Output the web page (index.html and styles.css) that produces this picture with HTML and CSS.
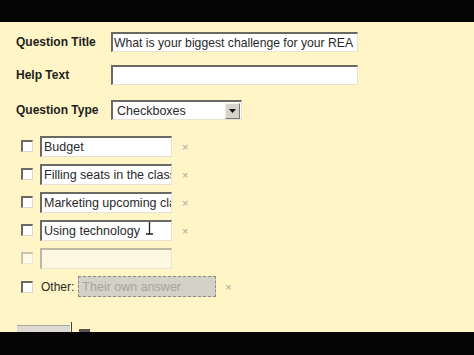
FILE: index.html
```html
<!DOCTYPE html>
<html>
<head>
<meta charset="utf-8">
<link rel="stylesheet" href="styles.css">
</head>
<body>
<div class="bar-top"></div>
<div class="main">
  <div class="field-row row-title">
    <span class="label">Question Title</span>
    <span class="input wide">What is your biggest challenge for your REA</span>
  </div>
  <div class="field-row row-help">
    <span class="label">Help Text</span>
    <span class="input wide"></span>
  </div>
  <div class="field-row row-type">
    <span class="label">Question Type</span>
    <span class="select"><span class="select-text">Checkboxes</span><span class="select-btn"><svg width="7" height="4" viewBox="0 0 7 4"><path d="M0 0H7L3.5 4Z" fill="#111"/></svg></span></span>
  </div>
  <div class="options">
    <div class="opt"><span class="cb"></span><span class="input opt-in">Budget</span><span class="x">×</span></div>
    <div class="opt"><span class="cb"></span><span class="input opt-in">Filling seats in the class</span><span class="x">×</span></div>
    <div class="opt"><span class="cb"></span><span class="input opt-in">Marketing upcoming classes</span><span class="x">×</span></div>
    <div class="opt"><span class="cb"></span><span class="input opt-in cursor-host">Using technology<svg class="ibeam" width="9" height="16" viewBox="0 0 9 16"><path d="M1 1H8M1 15H8M4.5 1V15" stroke="#222" stroke-width="1.3" fill="none"/></svg></span><span class="x">×</span></div>
    <div class="opt faded"><span class="cb"></span><span class="input opt-in"></span></div>
    <div class="opt other"><span class="cb"></span><span class="other-label">Other:</span><span class="other-in">Their own answer</span><span class="x">×</span></div>
  </div>
  <div class="bottom-row">
    <span class="btn"></span>
    <span class="btn-sep"></span>
    <span class="btn-small"></span>
  </div>
</div>
<div class="bar-bottom"></div>
</body>
</html>
```
FILE: styles.css
```css
html, body {
  margin: 0;
  padding: 0;
  background: #000;
}
body {
  width: 474px;
  height: 355px;
  overflow: hidden;
  font-family: "Liberation Sans", Arial, sans-serif;
}
.bar-top {
  height: 22px;
  background: #050505;
}
.bar-bottom {
  height: 23px;
  background: #050505;
}
.main {
  height: 310px;
  overflow: hidden;
  background: #fff5c6;
  padding: 10px 0 0 16px;
  box-sizing: border-box;
}
.field-row {
  display: flex;
  align-items: center;
  height: 20px;
}
.row-help { margin-top: 13px; }
.row-type { margin-top: 15px; }
.label {
  width: 95px;
  font-weight: bold;
  font-size: 12px;
  color: #1e1e1e;
}
.input {
  display: flex;
  align-items: center;
  box-sizing: border-box;
  height: 20px;
  background: #fff;
  border-top: 2px solid #6a6a62;
  border-left: 2px solid #6a6a62;
  border-right: 1px solid #e6e2d4;
  border-bottom: 1px solid #e6e2d4;
  font-size: 12.5px;
  color: #2a2a2a;
  padding-left: 2px;
  white-space: nowrap;
  overflow: hidden;
}
.wide { width: 247px; }
.row-title .input { font-size: 12.2px; padding-left: 1px; }
.select {
  display: flex;
  align-items: center;
  box-sizing: border-box;
  width: 131px;
  height: 20px;
  background: #fff;
  border-top: 2px solid #6a6a62;
  border-left: 2px solid #6a6a62;
  border-right: 1px solid #e6e2d4;
  border-bottom: 1px solid #e6e2d4;
}
.select-text {
  flex: 1;
  font-size: 12.5px;
  color: #2a2a2a;
  padding-left: 4px;
}
.select-btn {
  display: flex;
  align-items: center;
  justify-content: center;
  box-sizing: border-box;
  width: 15px;
  height: 16px;
  margin-right: 1px;
  background: #d6d3cb;
  border-top: 1px solid #f4f2ec;
  border-left: 1px solid #f4f2ec;
  border-right: 1px solid #7a7870;
  border-bottom: 1px solid #7a7870;
}
.options {
  margin-top: 16px;
  padding-left: 5px;
  display: flex;
  flex-direction: column;
  gap: 7px;
}
.opt {
  display: flex;
  align-items: center;
  height: 21px;
}
.cb {
  box-sizing: border-box;
  width: 12px;
  height: 12px;
  margin-top: -2px;
  background: #fff;
  border-top: 2px solid #6a6a62;
  border-left: 2px solid #6a6a62;
  border-right: 1px solid #dcd8ca;
  border-bottom: 1px solid #dcd8ca;
  margin-right: 7px;
}
.opt-in {
  width: 132px;
  height: 21px;
}
.x {
  font-size: 11px;
  color: #a8a8a0;
  margin-left: 10px;
}
.faded .cb {
  background: #fdf9e6;
  border-top-color: #c8c2ae;
  border-left-color: #c8c2ae;
  border-right-color: #efe9d4;
  border-bottom-color: #efe9d4;
}
.faded .opt-in {
  background: #fdf8df;
  border-top-color: #bdb7a3;
  border-left-color: #bdb7a3;
  border-right-color: #ece5cd;
  border-bottom-color: #ece5cd;
}
.other .cb { margin-top: 0; margin-right: 8px; }
.other-label {
  font-size: 12px;
  color: #2a2a2a;
  margin-right: 4px;
}
.other-in {
  box-sizing: border-box;
  width: 138px;
  height: 21px;
  display: flex;
  align-items: center;
  padding-left: 3px;
  background: #d4d1c6;
  border: 1px dashed #8e8c84;
  font-size: 12.5px;
  color: #a7a59c;
}
.other .x { margin-left: 9px; }
.cursor-host { position: relative; }
.ibeam {
  position: absolute;
  left: 103px;
  top: -3px;
}
.bottom-row {
  margin-top: 28px;
  display: flex;
  align-items: flex-start;
  padding-left: 1px;
}
.btn {
  width: 53px;
  height: 10px;
  background: #dcdad2;
  border-top: 1px solid #aaa8a0;
}
.btn-sep {
  width: 1px;
  height: 12px;
  margin-top: -3px;
  margin-left: 1px;
  background: #444;
}
.btn-small {
  width: 11px;
  height: 8px;
  margin-top: 4px;
  margin-left: 7px;
  background: #55534c;
}
```
